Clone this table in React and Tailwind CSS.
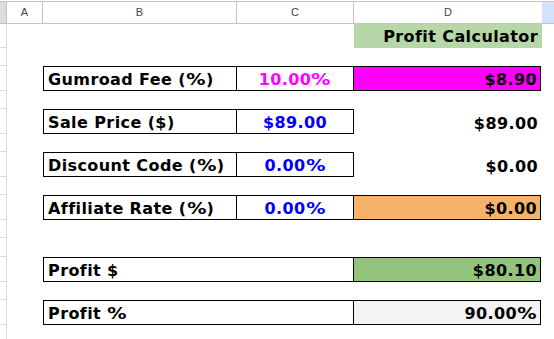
const font = { fontFamily: '"DejaVu Sans", Verdana, sans-serif' };

function Pct() {
  return <span className="inline-block w-[20px] scale-x-[1.2] text-center">%</span>;
}

function withPct(text) {
  const parts = text.split("%");
  return parts.map((p, i) => (
    <span key={i}>
      {p}
      {i < parts.length - 1 && <Pct />}
    </span>
  ));
}

function HeaderRow() {
  return (
    <div className="pt-px">
      <div className="flex h-[23px] border-y border-[#c4c4c4] text-[11px] text-[#444]" style={{ fontFamily: '"Liberation Sans", Arial, sans-serif' }}>
        <div className="w-[7px] shrink-0 border-r border-[#c4c4c4] bg-[#dcdcdc]" />
        <div className="flex w-[36px] shrink-0 items-center justify-center border-r border-[#c4c4c4]">A</div>
        <div className="flex w-[194px] shrink-0 items-center justify-center border-r border-[#c4c4c4]">B</div>
        <div className="flex w-[117px] shrink-0 items-center justify-center border-r border-[#c4c4c4]">C</div>
        <div className="flex w-[188px] shrink-0 items-center justify-center">D</div>
        <div className="flex-1 bg-[#d3e3fd]" />
      </div>
    </div>
  );
}

function Row({ h, children }) {
  return (
    <div className={"flex " + h}>
      <div className="w-[7px] shrink-0 border-r border-b border-[#d9d9d9]" />
      <div className="w-[36px] shrink-0" />
      {children}
    </div>
  );
}

function Spacer({ h = "h-[18px]" }) {
  return <Row h={h} />;
}

const txt = "text-[16px] leading-none font-bold tracking-[0.4px] whitespace-nowrap";

function InputRow({ label, value, color, result, resultBg, boxed }) {
  return (
    <Row h="h-[25px]">
      <div className={"flex w-[194px] shrink-0 items-end border border-black pb-[2px] pl-[4px] text-black " + txt}>
        {withPct(label)}
      </div>
      <div className={"flex w-[117px] shrink-0 items-end justify-center border-y border-r border-black pb-[2px] " + txt + " " + color}>
        {withPct(value)}
      </div>
      <div
        className={
          "flex w-[187px] shrink-0 items-end justify-end pb-[2px] pr-[3px] text-black " +
          txt +
          " " +
          (boxed ? "border-y border-r border-black " : "") +
          (resultBg || "")
        }
      >
        {result}
      </div>
    </Row>
  );
}

function ResultRow({ label, result, bg }) {
  return (
    <Row h="h-[25px]">
      <div className={"flex w-[311px] shrink-0 items-end border border-black pb-[2px] pl-[4px] text-black " + txt}>
        {withPct(label)}
      </div>
      <div className={"flex w-[187px] shrink-0 items-end justify-end border-y border-r border-black pb-[2px] pr-[3px] text-black " + txt + " " + bg}>
        {withPct(result)}
      </div>
    </Row>
  );
}

export default function App() {
  return (
    <div className="h-[339px] w-[554px] overflow-hidden bg-white" style={font}>
      <HeaderRow />
      <Row h="h-[24px]">
        <div className="w-[194px] shrink-0" />
        <div className="w-[117px] shrink-0" />
        <div className={"flex w-[188px] shrink-0 items-end justify-end bg-[#b6d7a8] pb-[3px] pr-[4px] text-black " + txt}>
          Profit Calculator
        </div>
      </Row>
      <Spacer />
      <InputRow label="Gumroad Fee (%)" value="10.00%" color="text-[#ff00ff]" result="$8.90" resultBg="bg-[#ff00ff]" boxed />
      <Spacer />
      <InputRow label="Sale Price ($)" value="$89.00" color="text-[#0000ff]" result="$89.00" />
      <Spacer />
      <InputRow label="Discount Code (%)" value="0.00%" color="text-[#0000ff]" result="$0.00" />
      <Spacer />
      <InputRow label="Affiliate Rate (%)" value="0.00%" color="text-[#0000ff]" result="$0.00" resultBg="bg-[#f6b26b]" boxed />
      <Spacer />
      <Spacer h="h-[19px]" />
      <ResultRow label="Profit $" result="$80.10" bg="bg-[#93c47d]" />
      <Spacer />
      <ResultRow label="Profit %" result="90.00%" bg="bg-[#f3f3f3]" />
      <Spacer h="h-[20px]" />
    </div>
  );
}
